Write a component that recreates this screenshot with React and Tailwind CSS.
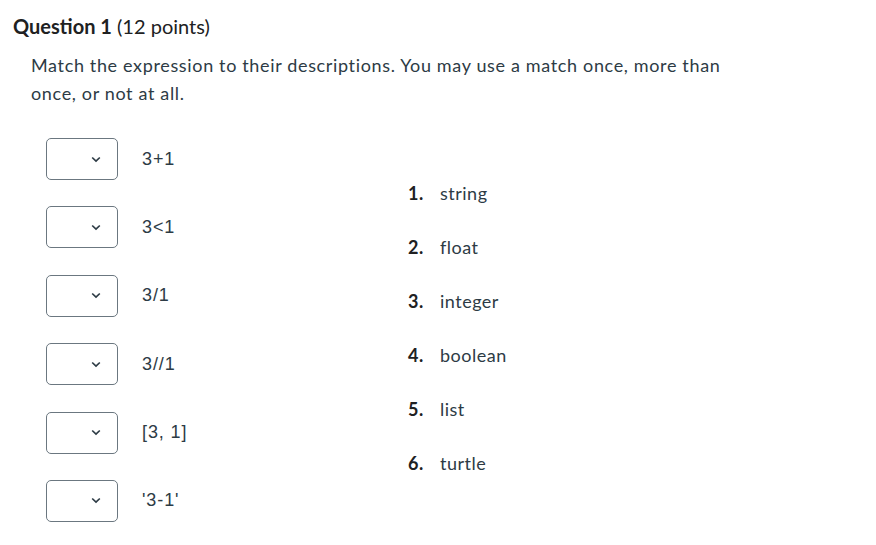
const expressions = ["3+1", "3<1", "3/1", "3//1", "[3, 1]", "'3-1'"];
const answers = ["string", "float", "integer", "boolean", "list", "turtle"];

const Chevron = () => (
  <svg width="10" height="7" viewBox="0 0 10 7" fill="none">
    <path d="M1.2 1.5l3.8 3.6 3.8-3.6" stroke="#2d3b45" strokeWidth="1.7" />
  </svg>
);

export default function App() {
  return (
    <div
      className="w-[876px] h-[545px] bg-white text-[#202122] overflow-hidden"
      style={{ fontFamily: "Lato, 'Noto Sans', sans-serif" }}
    >
      <h2 className="pl-[13px] pt-[14px] text-[20px] leading-[24px]">
        <span className="font-bold">Question 1</span>{" "}
        <span className="font-normal">(12 points)</span>
      </h2>
      <p className="pl-[31px] pt-[13px] w-[760px] text-[18px] tracking-[0.65px] leading-[28px] text-[#2d3b45]">
        Match the expression to their descriptions. You may use a match once,
        more than once, or not at all.
      </p>
      <div className="flex pl-[46px] pt-[31px]">
        <div className="flex flex-col w-[362px]">
          {expressions.map((e, i) => (
            <div key={i} className="flex items-center h-[42px] mb-[26.4px]">
              <div className="w-[72px] h-[42px] border border-[#6b7780] rounded-[5px] flex items-center justify-end pr-[16px]">
                <Chevron />
              </div>
              <span
                className="ml-[24px] text-[18px] tracking-[0.9px] text-[#2d3b45]"
                style={{ fontFamily: "'Liberation Sans', Arial, sans-serif" }}
              >
                {e}
              </span>
            </div>
          ))}
        </div>
        <ol className="pt-[41px]">
          {answers.map((a, i) => (
            <li key={i} className="flex h-[54px] text-[18px] tracking-[0.5px] leading-[28px] text-[#2d3b45]">
              <span className="w-[32px] font-bold text-[#202122]">{i + 1}.</span>
              <span>{a}</span>
            </li>
          ))}
        </ol>
      </div>
    </div>
  );
}
